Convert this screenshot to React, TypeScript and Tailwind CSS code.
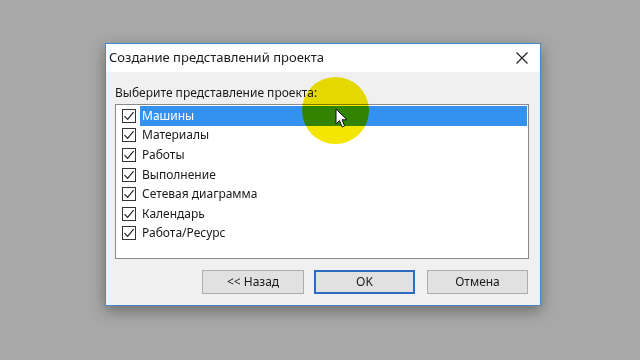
import React from 'react';

const views = ['Машины', 'Материалы', 'Работы', 'Выполнение', 'Сетевая диаграмма', 'Календарь', 'Работа/Ресурс'];

const CheckBox: React.FC = () => (
  <span className="flex h-[14px] w-[14px] shrink-0 items-center justify-center border border-[#333] bg-white">
    <svg width="12" height="12" viewBox="0 0 12 12">
      <path d="M1.5 6.2 L4.6 9.3 L10.6 2.2" fill="none" stroke="#222" strokeWidth="1.2" />
    </svg>
  </span>
);

const Cursor: React.FC = () => (
  <svg width="14" height="21" viewBox="0 0 14 21" className="absolute left-[335px] top-[108px]">
    <path d="M1 1 L1 16 L4.5 12.6 L7.2 19 L9.6 18 L7 11.8 L12 11.8 Z" fill="#fff" stroke="#111" strokeWidth="1" strokeLinejoin="round" />
  </svg>
);

export default function App() {
  return (
    <div className="relative h-[360px] w-[640px] overflow-hidden bg-[#a8a8a8] pl-[105px] pt-[43px]" style={{ fontFamily: '"Noto Sans", "Open Sans", sans-serif' }}>
      {/* Dialog */}
      <div className="flex h-[263px] w-[436px] flex-col border border-[#4a86c8] bg-[#f0f0f0] shadow-[0_5px_14px_rgba(0,0,0,0.35)]">
        <div className="flex h-[28px] items-center justify-between bg-white pl-[3px] pr-[11px]">
          <span className="text-[13px] text-[#1a1a1a]">Создание представлений проекта</span>
          <svg width="14" height="14" viewBox="0 0 14 14">
            <path d="M1.5 1.5 L12.5 12.5 M12.5 1.5 L1.5 12.5" stroke="#222" strokeWidth="1.2" />
          </svg>
        </div>

        <div className="flex flex-1 flex-col pl-[9px] pr-[11px]">
          <div className="pt-[12px] text-[12px] leading-[17px] text-[#1a1a1a]">Выберите представление проекта:</div>

          {/* List box */}
          <div className="mt-[3px] flex h-[155px] flex-col border border-[#8a8a8a] bg-white pt-[1px]">
            {views.map((v, i) => (
              <div key={v} className="flex h-[19.6px] items-center pl-[6px]">
                <CheckBox />
                <span
                  className={
                    i === 0
                      ? 'ml-[4px] mr-[1px] flex h-full flex-1 items-center bg-[#3391f0] pl-[2px] text-[12px] text-white'
                      : 'ml-[4px] pl-[2px] text-[12px] text-[#1a1a1a]'
                  }
                >
                  {v}
                </span>
              </div>
            ))}
          </div>

          {/* Buttons */}
          <div className="mt-[11px] flex justify-end pr-[1px]">
            <button className="h-[24px] w-[102px] border border-[#adadad] bg-[#e1e1e1] text-[12px] text-[#1a1a1a]">&lt;&lt; Назад</button>
            <button className="ml-[10px] h-[24px] w-[101px] border-2 border-[#2a6cc0] bg-[#e1e1e1] text-[12px] text-[#1a1a1a]">OK</button>
            <button className="ml-[12px] h-[24px] w-[101px] border border-[#adadad] bg-[#e1e1e1] text-[12px] text-[#1a1a1a]">Отмена</button>
          </div>
        </div>
      </div>

      {/* Cursor highlight */}
      <div className="pointer-events-none absolute left-[302px] top-[77px] h-[67px] w-[67px] rounded-full bg-[#f4e600] mix-blend-multiply" />
      <Cursor />
    </div>
  );
}
